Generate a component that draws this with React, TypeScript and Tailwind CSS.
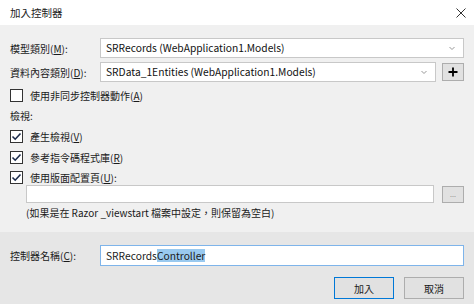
import React from "react";

const font = { fontFamily: '"Noto Sans CJK TC", "Noto Sans", sans-serif' };

function Check({ checked }: { checked?: boolean }) {
  return (
    <span className="w-[13px] h-[13px] border border-[#333] bg-white flex items-center justify-center shrink-0">
      {checked && (
        <svg width="11" height="11" viewBox="0 0 11 11">
          <path d="M1.5 5.5 L4.2 8.2 L9.5 2.5" stroke="#1b2a4a" strokeWidth="1.6" fill="none" />
        </svg>
      )}
    </span>
  );
}

function Chevron() {
  return (
    <svg width="8" height="5" viewBox="0 0 8 5" className="shrink-0">
      <path d="M1.5 1 L4 3.5 L6.5 1" stroke="#999" strokeWidth="1" fill="none" />
    </svg>
  );
}

function Select({ text, className }: { text: string; className?: string }) {
  return (
    <div className={"h-[20px] border border-[#c8c8c8] bg-white flex items-center pl-[5px] pr-[7px] " + (className ?? "")}>
      <span className="flex-1 text-[10.25px] text-[#111] leading-none whitespace-nowrap">{text}</span>
      <Chevron />
    </div>
  );
}

export default function App() {
  return (
    <div className="w-[474px] h-[304px] bg-[#f0f0f0] flex flex-col text-[#1a1a1a] overflow-hidden text-[10px]" style={font}>
      {/* Title bar */}
      <div className="h-[25px] bg-white flex items-center pl-[10px] pr-[8px] shrink-0">
        <span className="flex-1 text-[10.5px] text-[#222]">加入控制器</span>
        <svg width="10" height="10" viewBox="0 0 10 10">
          <path d="M0.5 0.5 L9.5 9.5 M9.5 0.5 L0.5 9.5" stroke="#333" strokeWidth="1" />
        </svg>
      </div>

      {/* Body */}
      <div className="flex-1 flex flex-col pl-[10px] pr-[10px] pt-[13px]">
        <div className="flex items-center h-[20px]">
          <span className="w-[90px] whitespace-nowrap">模型類別(<u>M</u>):</span>
          <Select text="SRRecords (WebApplication1.Models)" className="flex-1" />
        </div>
        <div className="flex items-center h-[20px] mt-[4px]">
          <span className="w-[90px] whitespace-nowrap">資料內容類別(<u>D</u>):</span>
          <Select text="SRData_1Entities (WebApplication1.Models)" className="flex-1" />
          <div className="w-[22px] h-[18px] ml-[6px] bg-[#e1e1e1] border border-[#adadad] flex items-center justify-center">
            <svg width="10" height="10" viewBox="0 0 10 10">
              <path d="M5 0.5 V9.5 M0.5 5 H9.5" stroke="#000" strokeWidth="1.8" />
            </svg>
          </div>
        </div>
        <div className="flex items-center gap-[7px] mt-[5px] h-[16px]">
          <Check />
          <span>使用非同步控制器動作(<u>A</u>)</span>
        </div>
        <div className="mt-[4px] h-[16px] flex items-center">檢視:</div>
        <div className="flex items-center gap-[7px] mt-[5px] h-[16px]">
          <Check checked />
          <span>產生檢視(<u>V</u>)</span>
        </div>
        <div className="flex items-center gap-[7px] mt-[5px] h-[16px]">
          <Check checked />
          <span>參考指令碼程式庫(<u>R</u>)</span>
        </div>
        <div className="flex items-center gap-[7px] mt-[4px] h-[16px]">
          <Check checked />
          <span>使用版面配置頁(<u>U</u>):</span>
        </div>
        <div className="flex items-center pl-[16px]">
          <div className="flex-1 h-[18px] border border-[#c8c8c8] bg-white" />
          <div className="w-[22px] h-[17px] ml-[8px] bg-[#e1e1e1] border border-[#adadad] flex items-center justify-center text-[7px] text-[#888] leading-none">
            ...
          </div>
        </div>
        <div className="pl-[16px] mt-[1px] h-[17px] flex items-center whitespace-nowrap">
          (如果是在 Razor _viewstart 檔案中設定，則保留為空白)
        </div>
      </div>

      {/* Footer */}
      <div className="h-[72px] bg-[#e6e6e6] shrink-0 flex flex-col pl-[10px] pr-[10px] pt-[13px]">
        <div className="flex items-center h-[21px]">
          <span className="w-[90px] whitespace-nowrap">控制器名稱(<u>C</u>):</span>
          <div className="flex-1 h-[21px] border border-[#7eb4ea] bg-white flex items-center pl-[5px] text-[10.25px]">
            <span className="leading-[13px]">SRRecords</span>
            <span className="leading-[13px] bg-[#99c9ef]">Controller</span>
          </div>
        </div>
        <div className="flex justify-end gap-[10px] mt-[11px]">
          <div className="w-[60px] h-[22px] border border-[#0078d7] bg-[#e1e1e1] flex items-center justify-center">加入</div>
          <div className="w-[60px] h-[22px] border border-[#adadad] bg-[#e1e1e1] flex items-center justify-center">取消</div>
        </div>
      </div>
    </div>
  );
}
